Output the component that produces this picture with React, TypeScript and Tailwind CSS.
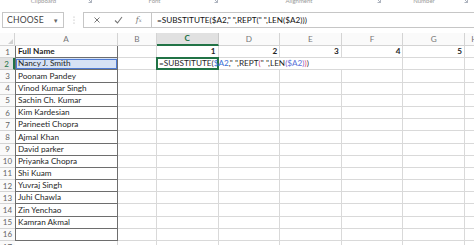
import React from "react";

const names = [
  "Full Name",
  "Nancy J. Smith",
  "Poonam Pandey",
  "Vinod Kumar Singh",
  "Sachin Ch. Kumar",
  "Kim Kardesian",
  "Parineeti Chopra",
  "Ajmal Khan",
  "David parker",
  "Priyanka Chopra",
  "Shi Kuam",
  "Yuvraj Singh",
  "Juhi Chawla",
  "Zin Yenchao",
  "Kamran Akmal",
  "",
  "",
];

const letters = ["A", "B", "C", "D", "E", "F", "G", "H"];

function Launcher() {
  return (
    <svg width="5" height="5" viewBox="0 0 5 5" className="text-gray-400">
      <path d="M0.5 0.5 L4.5 4.5 M4.5 1.5 V4.5 H1.5" stroke="currentColor" strokeWidth="0.8" fill="none" />
    </svg>
  );
}

function CellFormula() {
  return (
    <span>
      =SUBSTITUTE(<span className="text-[#3a6fd8]">$A2</span>," ",REPT
      <span className="text-[#d8407e]">(</span>" ",LEN
      <span className="text-[#8b55c9]">(</span>
      <span className="text-[#5a72d8]">$A2</span>
      <span className="text-[#8b55c9]">)</span>
      <span className="text-[#d8407e]">)</span>)
    </span>
  );
}

export default function App() {
  return (
    <div className="w-[474px] h-[245px] overflow-hidden bg-white font-['Lato','Liberation_Sans',sans-serif] text-[8.2px] text-[#1f1f1f]">
      {/* ribbon group labels, cut off at top */}
      <div className="h-[4px] overflow-hidden flex text-[6px] text-[#9a9a9a] leading-[6px]">
        {[
          ["Clipboard", "w-[96px]"],
          ["Font", "w-[126px]"],
          ["Alignment", "w-[163px]"],
          ["Number", "w-[87px]"],
        ].map(([label, w]) => (
          <div key={label} className={`${w} flex items-start justify-between -mt-[2px] pr-[4px]`}>
            <span className="flex-1 text-center">{label}</span>
            <Launcher />
          </div>
        ))}
      </div>

      {/* formula bar */}
      <div className="mt-[8px] h-[16px] flex items-stretch">
        <div className="ml-[2px] w-[62px] border border-[#c6c6c6] flex items-center justify-between px-[4px] text-[8.6px] text-[#444] tracking-[0.2px]">
          <span>CHOOSE</span>
          <span className="text-[6px] text-[#666]">▼</span>
        </div>
        <div className="w-[19px] flex items-center justify-center">
          <svg width="2" height="8" viewBox="0 0 2 8">
            <circle cx="1" cy="1" r="0.6" fill="#aaa" />
            <circle cx="1" cy="4" r="0.6" fill="#aaa" />
            <circle cx="1" cy="7" r="0.6" fill="#aaa" />
          </svg>
        </div>
        <div className="flex-1 border border-r-0 border-[#c6c6c6] flex">
          <div className="w-[68px] border-r border-[#c6c6c6] flex items-center justify-around px-[3px]">
            <svg width="8" height="8" viewBox="0 0 8 8">
              <path d="M1.5 1.5 L6.5 6.5 M6.5 1.5 L1.5 6.5" stroke="#777" strokeWidth="1" />
            </svg>
            <svg width="9" height="8" viewBox="0 0 9 8">
              <path d="M1 4.5 L3.5 7 L8 1" stroke="#777" strokeWidth="1.1" fill="none" />
            </svg>
            <span className="font-['DejaVu_Serif',serif] italic text-[8px] text-[#777]">
              f<span className="text-[5px]">x</span>
            </span>
          </div>
          <div className="flex items-center pl-[5px] whitespace-nowrap text-[#111]">
            =SUBSTITUTE($A2," ",REPT(" ",LEN($A2)))
          </div>
        </div>
      </div>

      {/* sheet */}
      <div className="mt-[5px] grid grid-cols-[15px_103px_39px_61.6px_61.6px_61.6px_61.6px_61.6px_20px] grid-rows-[13px_repeat(17,12.2px)]">
        {/* corner */}
        <div className="border-r border-b border-[#d4d4d4] bg-[#fafafa] flex items-end justify-end p-[1px]">
          <svg width="5" height="5" viewBox="0 0 5 5">
            <path d="M5 0 V5 H0 Z" fill="#d0d0d0" />
          </svg>
        </div>
        {letters.map((l) => (
          <div
            key={l}
            className={
              l === "C"
                ? "bg-[#e1e1e1] border-r border-[#c8c8c8] border-b-2 border-b-[#217346] flex items-center justify-center text-[#217346] font-bold"
                : "bg-[#fafafa] border-r border-b border-[#d4d4d4] flex items-center justify-center text-[#777]"
            }
          >
            {l}
          </div>
        ))}

        {names.map((name, i) => {
          const row = i + 1;
          const nums = row === 1 ? ["", "1", "2", "3", "4", "5", ""] : ["", "", "", "", "", "", ""];
          const inA = row <= 16;
          return (
            <React.Fragment key={row}>
              <div
                className={
                  row === 2
                    ? "bg-[#e1e1e1] border-r-2 border-r-[#217346] border-b border-[#c8c8c8] flex items-center justify-center text-[#217346] text-[8px]"
                    : "bg-[#fafafa] border-b border-[#d4d4d4] flex items-center justify-center text-[#666] text-[8px]"
                }
              >
                {row}
              </div>
              <div
                className={[
                  "flex items-end pl-[2px] leading-[11px] whitespace-nowrap",
                  inA ? "border-l border-r-[1.5px] border-b border-[#6e6e6e]" : "border-r border-b border-[#d4d4d4]",
                  row === 1 ? "font-bold" : "",
                  row === 2 ? "bg-[#d6e2f5] outline outline-1 -outline-offset-2 outline-[#4f7bd3]" : "",
                ].join(" ")}
              >
                {name}
              </div>
              {nums.map((n, j) => {
                if (row === 2 && j === 1) {
                  return (
                    <div
                      key={j}
                      className="relative z-10 border-2 border-[#217346] -ml-px -mt-px h-[13.2px] flex items-end pl-[1px] leading-[10px] whitespace-nowrap overflow-visible"
                    >
                      <CellFormula />
                      <span className="ml-[1px] inline-block w-px h-[9px] bg-[#111]" />
                    </div>
                  );
                }
                const noRight = row === 2 && (j === 2 || j === 3);
                return (
                  <div
                    key={j}
                    className={[
                      "border-b border-[#d9d9d9] flex items-end justify-end pr-[2px] leading-[11px] font-bold",
                      noRight ? "" : "border-r",
                    ].join(" ")}
                  >
                    {n}
                  </div>
                );
              })}
            </React.Fragment>
          );
        })}
      </div>
    </div>
  );
}
